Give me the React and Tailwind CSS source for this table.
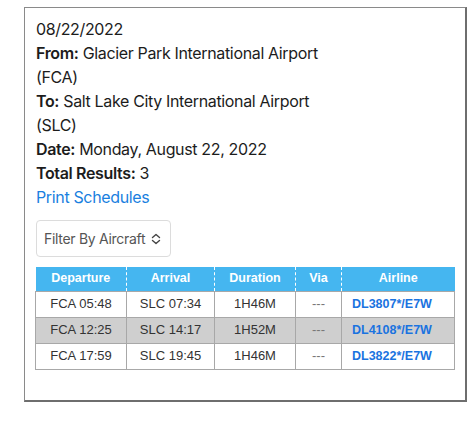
import React from "react";

const rows = [
  { dep: "FCA 05:48", arr: "SLC 07:34", dur: "1H46M", via: "---", airline: "DL3807*/E7W" },
  { dep: "FCA 12:25", arr: "SLC 14:17", dur: "1H52M", via: "---", airline: "DL4108*/E7W" },
  { dep: "FCA 17:59", arr: "SLC 19:45", dur: "1H46M", via: "---", airline: "DL3822*/E7W" },
];

const cols = ["w-[91px]", "w-[88px]", "w-[81px]", "w-[46px]", "w-[113px]"];

const App = () => {
  return (
    <div className="w-[474px] h-[421px] bg-white pt-[7px] pl-[24px] font-['Inter','Liberation_Sans',sans-serif]">
      <div className="w-[443px] h-[395px] border border-[#8a8a8a] border-r-2 border-b-2 border-r-[#6e6e6e] border-b-[#6e6e6e] pl-[11px] pt-[9px]">
        <div className="text-[16px] leading-[24px] tracking-[-0.35px] text-[#1c1c1c]">
          <div>08/22/2022</div>
          <div>
            <b className="font-semibold">From:</b> Glacier Park International Airport
            <br />
            (FCA)
          </div>
          <div>
            <b className="font-semibold">To:</b> Salt Lake City International Airport
            <br />
            (SLC)
          </div>
          <div>
            <b className="font-semibold">Date:</b> Monday, August 22, 2022
          </div>
          <div>
            <b className="font-semibold">Total Results:</b> 3
          </div>
          <a className="text-[#1a7fe0]">Print Schedules</a>
        </div>

        <div className="mt-[11px] w-[135px] h-[37px] rounded-[4px] border border-[#dcdcdc] flex items-center pl-[7px] gap-[6px] text-[14px] tracking-[-0.3px] text-[#555] whitespace-nowrap">
          <span>Filter By Aircraft</span>
          <svg width="10" height="12" viewBox="0 0 10 12" fill="none" stroke="#444" strokeWidth="1.4" strokeLinecap="round" strokeLinejoin="round">
            <path d="M1.5 4.5L5 1.5L8.5 4.5" />
            <path d="M1.5 7.5L5 10.5L8.5 7.5" />
          </svg>
        </div>

        <table className="mt-[10px] -ml-px border-collapse text-[13px] text-[#333] font-['Liberation_Sans',sans-serif]">
          <thead>
            <tr className="bg-[#45b6f0] text-white h-[24px] text-[12.5px]">
              {["Departure", "Arrival", "Duration", "Via", "Airline"].map((h, i) => (
                <th
                  key={h}
                  className={`${cols[i]} p-0 font-bold text-center ${i < 4 ? "border-r border-dashed border-r-white" : ""}`}
                >
                  {h}
                </th>
              ))}
            </tr>
          </thead>
          <tbody>
            {rows.map((r, idx) => (
              <tr key={r.airline} className={`h-[26px] ${idx === 1 ? "bg-[#cfcfcf]" : "bg-white"}`}>
                <td className="border border-[#a8a8a8] text-center p-0">{r.dep}</td>
                <td className="border border-[#a8a8a8] text-center p-0">{r.arr}</td>
                <td className="border border-[#a8a8a8] text-center p-0">{r.dur}</td>
                <td className="border border-[#a8a8a8] text-center p-0 text-[#777]">{r.via}</td>
                <td className="border border-[#a8a8a8] text-left pl-[10px] p-0 font-bold text-[12.5px] text-[#1a73e0]">{r.airline}</td>
              </tr>
            ))}
          </tbody>
        </table>
      </div>
    </div>
  );
};

export default App;
